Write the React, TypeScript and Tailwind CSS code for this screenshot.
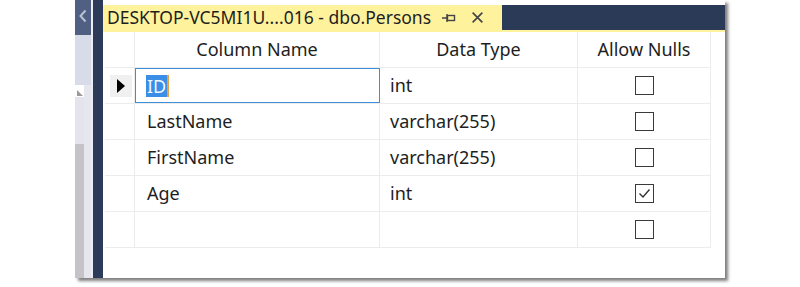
import React from "react";

const font = { fontFamily: '"Noto Sans", "Open Sans", sans-serif' };

function Check({ checked }: { checked?: boolean }) {
  return (
    <div className="w-[19px] h-[19px] border-[1.5px] border-[#3a3a3a] bg-white flex items-center justify-center">
      {checked && (
        <svg width="15" height="15" viewBox="0 0 15 15">
          <path d="M2.5 7.5 L6 11 L12.5 3.5" fill="none" stroke="#333" strokeWidth="1.4" />
        </svg>
      )}
    </div>
  );
}

const rows = [
  { name: "ID", type: "int", nulls: false, sel: true },
  { name: "LastName", type: "varchar(255)", nulls: false },
  { name: "FirstName", type: "varchar(255)", nulls: false },
  { name: "Age", type: "int", nulls: true },
  { name: "", type: "", nulls: false },
];

export default function App() {
  return (
    <div className="w-[800px] h-[287px] bg-white overflow-hidden" style={font}>
      <div className="ml-[75px] w-[650px] h-[278px] flex bg-white shadow-[3px_3px_3px_rgba(0,0,0,0.5)]">
        {/* left strip */}
        <div className="w-[16px] flex flex-col">
          <div className="h-[35px] bg-[#4f6083] flex items-start justify-center pt-[9px]">
            <svg width="10" height="14" viewBox="0 0 10 14">
              <path d="M7.5 1.5 L2.5 7 L7.5 12.5" fill="none" stroke="#b9c2d6" strokeWidth="2" />
            </svg>
          </div>
          <div className="h-[50px] bg-[#d8dce8]" />
          <div className="flex flex-1">
            <div className="w-[9px] flex flex-col">
              <div className="h-[12px] bg-white flex items-end justify-center">
                <svg width="8" height="8" viewBox="0 0 8 8">
                  <path d="M1 7 L7 7 L1 1 Z" fill="#9a9a9a" />
                </svg>
              </div>
              <div className="h-[47px] bg-[#e4e4ec]" />
              <div className="flex-1 bg-[#c4c4c8]" />
            </div>
            <div className="flex-1 bg-[#e6e6ee]" />
          </div>
        </div>
        <div className="w-[2px] bg-[#eceef4]" />
        <div className="w-[10px] bg-[#2c3b5a]" />
        {/* main */}
        <div className="flex-1 flex flex-col">
          <div className="h-[5px] bg-white" />
          <div className="h-[25px] flex">
            <div className="w-[399px] bg-[#fff29d] flex items-center pl-[4px] text-[17.5px] text-[#1e1e1e] leading-none">
              <span className="whitespace-nowrap">DESKTOP-VC5MI1U....016 - dbo.Persons</span>
              <svg className="ml-[10px]" width="16" height="12" viewBox="0 0 16 12">
                <path d="M1 6 H6 M6 2 V10" stroke="#444" strokeWidth="1.4" fill="none" />
                <rect x="6.5" y="3.5" width="7" height="5" stroke="#444" strokeWidth="1.4" fill="none" />
              </svg>
              <svg className="ml-[14px]" width="13" height="13" viewBox="0 0 12 12">
                <path d="M1.5 1.5 L10.5 10.5 M10.5 1.5 L1.5 10.5" stroke="#444" strokeWidth="1.5" />
              </svg>
            </div>
            <div className="flex-1 bg-[#2b3a56]" />
          </div>
          <div className="h-[2px] bg-[#fff29d]" />
          {/* grid */}
          <div className="flex flex-col ml-[2px] w-[606px] text-[18px] text-[#1e1e1e]">
            <div className="h-[36px] flex border-b border-[#ececec]">
              <div className="w-[30px] border-r border-[#ececec]" />
              <div className="w-[245px] border-r border-[#ececec] flex items-center justify-center">Column Name</div>
              <div className="w-[198px] border-r border-[#ececec] flex items-center justify-center">Data Type</div>
              <div className="w-[133px] border-r border-[#ececec] flex items-center justify-center">Allow Nulls</div>
            </div>
            {rows.map((r, i) => (
              <div key={i} className="h-[36px] flex border-b border-[#ececec]">
                <div className="w-[30px] border-r border-[#ececec] flex items-center justify-end pr-[2px]">
                  {r.sel && (
                    <div className="w-[22px] h-[22px] bg-[#f0f0f0] flex items-center justify-center">
                      <svg width="10" height="14" viewBox="0 0 10 14">
                        <path d="M1 0 L9 7 L1 14 Z" fill="#000" />
                      </svg>
                    </div>
                  )}
                </div>
                <div
                  className={
                    r.sel
                      ? "w-[245px] border border-[#3d8fd8] flex items-center pl-[10px] bg-white"
                      : "w-[245px] border-r border-[#ececec] flex items-center pl-[12px]"
                  }
                >
                  {r.sel ? (
                    <span className="flex items-center">
                      <span className="bg-[#3a8ee6] text-[#eef6ff] px-[1px] leading-[22px]">ID</span>
                      <span className="w-[2px] h-[22px] bg-[#e8a040]" />
                    </span>
                  ) : (
                    r.name
                  )}
                </div>
                <div className="w-[198px] border-r border-[#ececec] flex items-center pl-[10px]">{r.type}</div>
                <div className="w-[133px] border-r border-[#ececec] flex items-center justify-center">
                  <Check checked={r.nulls} />
                </div>
              </div>
            ))}
          </div>
        </div>
      </div>
    </div>
  );
}
